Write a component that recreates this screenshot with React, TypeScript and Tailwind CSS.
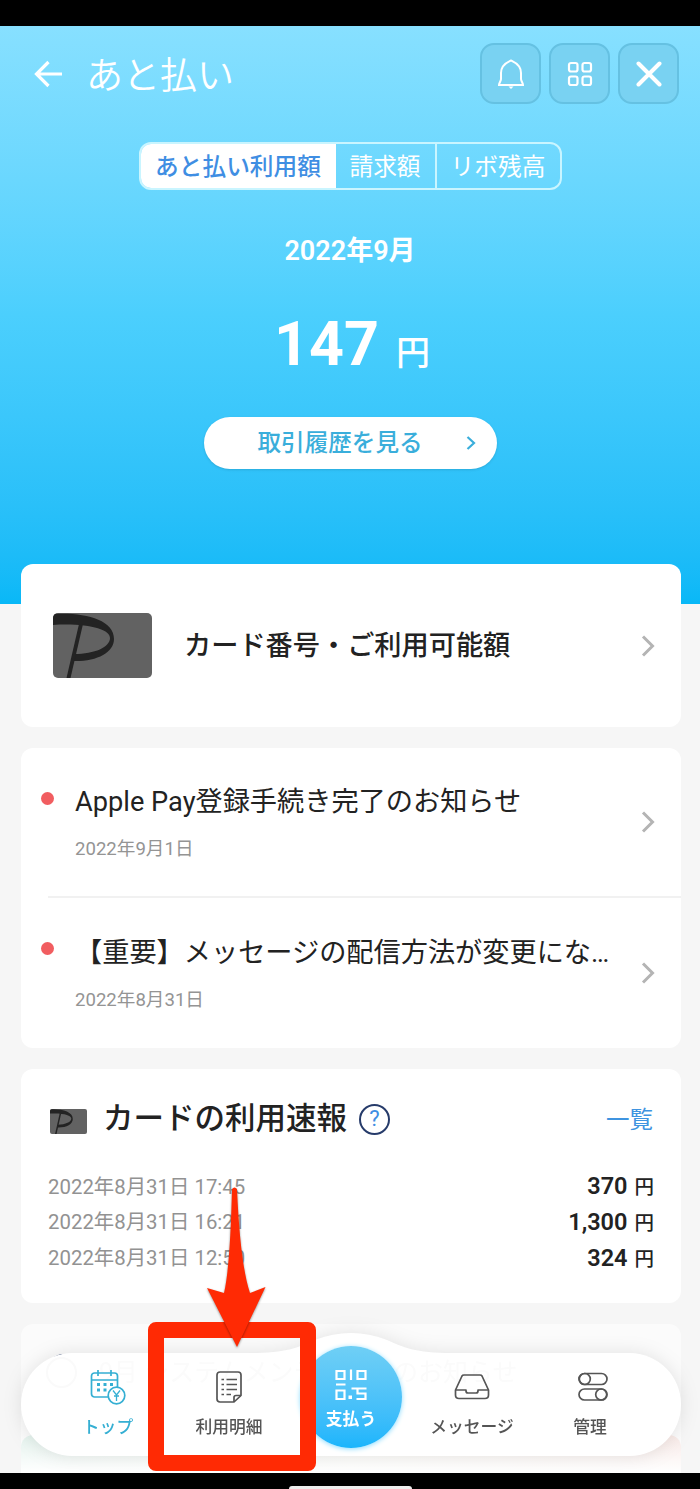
import type { ReactNode } from 'react';

interface Notice {
  title: string;
  date: string;
}

interface Usage {
  date: string;
  amount: string;
}

const notices: Notice[] = [
  { title: 'Apple Pay登録手続き完了のお知らせ', date: '2022年9月1日' },
  { title: '【重要】メッセージの配信方法が変更にな…', date: '2022年8月31日' },
];

const usages: Usage[] = [
  { date: '2022年8月31日 17:45', amount: '370' },
  { date: '2022年8月31日 16:21', amount: '1,300' },
  { date: '2022年8月31日 12:50', amount: '324' },
];

function ChevronRight() {
  return (
    <svg width="14" height="24" viewBox="0 0 14 24" fill="none" stroke="#b4b4b4" strokeWidth="3" className="shrink-0">
      <path d="M2 2.5L11.5 12L2 21.5" />
    </svg>
  );
}

function CardLogo({ className }: { className: string }) {
  return (
    <svg viewBox="0 0 99 65" className={className} preserveAspectRatio="none">
      <rect width="99" height="65" fill="#626262" />
      <path
        d="M0 1C30-1 61 6 61 26C61 40 43 49 19 48L21 41C42 41 57 34 57 25C57 16 34 10 0 12Z"
        fill="#232323"
      />
      <path d="M26 11H30L17.500 65H13.500Z" fill="#232323" />
    </svg>
  );
}

function HeaderButton({ children }: { children: ReactNode }) {
  return (
    <button className="flex h-[61px] w-[61px] items-center justify-center rounded-[14px] border-2 border-[#65c1e2] bg-[#79d2f2]">
      {children}
    </button>
  );
}

function Header() {
  return (
    <header className="flex items-center pl-[33px] pr-[21px] pt-[17px]">
      <svg width="30" height="30" viewBox="0 0 30 30" fill="none" stroke="#fff" strokeWidth="3.200">
        <path d="M15.500 3L3.500 15L15.500 27M3.500 15H29" />
      </svg>
      <h1 className="ml-[23px] flex-1 pt-[5px] text-[37px] font-[350] leading-none text-white">あと払い</h1>
      <div className="flex gap-2">
        <HeaderButton>
          <svg width="28" height="32" viewBox="0 0 28 32" fill="none" stroke="#fff" strokeWidth="2">
            <path d="M14 2.500C11 4 4 6.500 4 15V21C4 23 2 25 2 27H26C26 25 24 23 24 21V15C24 6.500 17 4 14 2.500Z" />
            <path d="M11.500 28.500H16.500L14 31Z" fill="#fff" stroke="none" />
          </svg>
        </HeaderButton>
        <HeaderButton>
          <svg width="26" height="26" viewBox="0 0 26 26" fill="none" stroke="#fff" strokeWidth="2.200">
            <rect x="2" y="2" width="8.500" height="8.500" rx="2" />
            <rect x="15.500" y="2" width="8.500" height="8.500" rx="2" />
            <rect x="2" y="15.500" width="8.500" height="8.500" rx="2" />
            <rect x="15.500" y="15.500" width="8.500" height="8.500" rx="2" />
          </svg>
        </HeaderButton>
        <HeaderButton>
          <svg width="26" height="26" viewBox="0 0 26 26" stroke="#fff" strokeWidth="4" strokeLinecap="round">
            <path d="M2.500 2.500L23.500 23.500M23.500 2.500L2.500 23.500" />
          </svg>
        </HeaderButton>
      </div>
    </header>
  );
}

function Summary() {
  return (
    <section className="flex h-[578px] flex-col bg-linear-to-b from-[#87e0ff] via-[#4bcffd] to-[#08b8f7]">
      <Header />
      <div className="mx-auto mt-[38px] flex h-[48px] w-[423px] overflow-hidden rounded-xl border-2 border-[#c9f5ff] text-[23.700px] text-white">
        <button className="w-[195px] bg-white pt-[3px] font-medium text-[#3f8ee3]">あと払い利用額</button>
        <button className="w-[101px] border-r-2 border-[#c9f5ff] pt-[3px]">請求額</button>
        <button className="flex-1 pt-[3px]">リボ残高</button>
      </div>
      <p className="mt-[46px] text-center text-[27px] font-semibold leading-[30px] text-white">2022年9月</p>
      <p className="mt-[48px] flex h-[60px] items-baseline justify-center gap-[17px] pl-1 font-medium leading-[60px] text-white">
        <span className="text-[61px] font-bold">147</span>
        <span className="text-[34px]">円</span>
      </p>
      <button className="mx-auto mt-[43px] flex h-[52px] w-[293px] items-center rounded-full bg-white pl-[54px] pr-[20px] text-[23.600px] font-medium text-[#3aaedb] shadow-sm">
        <span className="flex-1 pt-[1px] text-left">取引履歴を見る</span>
        <svg width="12" height="16" viewBox="0 0 12 16" fill="none" stroke="#3aaedb" strokeWidth="2.200">
          <path d="M2.500 2L9 8L2.500 14" />
        </svg>
      </button>
    </section>
  );
}

function NoticeRow({ notice }: { notice: Notice }) {
  return (
    <li className="relative ml-[27px] flex h-[150px] items-center pr-[26px]">
      <span className="absolute -left-[7px] top-[44px] h-[13px] w-[13px] rounded-full bg-[#f15d60]" />
      <div className="flex-1 pl-[27px] pt-[1px]">
        <p className="whitespace-nowrap text-[27.200px] leading-[40px] text-[#222]">{notice.title}</p>
        <p className="mt-[13px] text-[18.600px] leading-[28px] text-[#949494]">{notice.date}</p>
      </div>
      <ChevronRight />
    </li>
  );
}

function UsageCard() {
  return (
    <section className="mt-[21px] h-[234px] rounded-xl bg-white pl-[27px] pr-[27px] pt-[29px]">
      <div className="flex h-[42px] items-center">
        <CardLogo className="ml-[2px] mt-[5px] h-[25px] w-[37px] rounded-[2px]" />
        <h2 className="ml-[16px] text-[30.500px] font-medium leading-[42px] text-[#222]">カードの利用速報</h2>
        <span className="ml-[12px] flex h-[31px] w-[31px] items-center justify-center rounded-full border-2 border-[#263b6a] text-[22px] leading-none text-[#3f8ee3]">
          ?
        </span>
        <a className="ml-auto pr-[1px] pt-[3px] text-[23.500px] text-[#3f94e0]">一覧</a>
      </div>
      <ul className="mt-[29px]">
        {usages.map((u) => (
          <li key={u.date} className="flex h-[35.700px] items-center justify-between">
            <span className="text-[20.400px] text-[#929292]">{u.date}</span>
            <span className="flex items-baseline gap-[7px] text-[#222]">
              <b className="text-[23.500px] font-semibold">{u.amount}</b>
              <span className="text-[19.500px] font-medium">円</span>
            </span>
          </li>
        ))}
      </ul>
    </section>
  );
}

function NavItem({ label, active, className, children }: { label: string; active?: boolean; className: string; children: ReactNode }) {
  return (
    <button className={`absolute top-[15px] flex w-[120px] flex-col items-center ${active ? 'text-[#35afd3]' : 'text-[#555]'} ${className}`}>
      <span className="flex h-[38px] items-center justify-center">{children}</span>
      <span className="mt-[8px] text-[16.800px] font-medium leading-[26px]">{label}</span>
    </button>
  );
}

function BottomNav() {
  return (
    <nav className="absolute left-[21px] top-[1353px] h-[103px] w-[660px] drop-shadow-[0_0_9px_rgba(0,0,0,0.1)]">
      <svg className="absolute left-[230px] -top-[20px]" width="200" height="60" viewBox="0 0 200 60">
        <path d="M0 20C35 20 49 14 64 7Q100-7 136 7C151 14 165 20 200 20V60H0Z" fill="#fff" />
      </svg>
      <div className="absolute inset-0 rounded-full bg-white" />
      <p className="absolute left-[78px] top-[3px] whitespace-nowrap text-[25px] leading-[34px] text-[#fbfbfb]">9月 システムメンテナンスのお知らせ</p>
      <span className="absolute left-[25px] top-[4px] h-[31px] w-[31px] rounded-full border-2 border-[#fafafa]" />
      <NavItem label="トップ" active className="left-[27px]">
        <svg width="38" height="38" viewBox="0 0 38 38" fill="none" stroke="currentColor" strokeWidth="1.700">
          <rect x="2.500" y="5" width="26" height="24" rx="3" />
          <path d="M2.500 12H28.500M9 2V8M22 2V8" />
          <path d="M8 16.500H11M14.500 16.500H17.500M21 16.500H24M8 22H11M14.500 22H17.500" strokeWidth="3" />
          <circle cx="27.500" cy="27.500" r="8.300" fill="#fff" />
          <path d="M24 22.500L27.500 27L31 22.500M27.500 27V33M25 28H30" strokeWidth="1.300" />
        </svg>
      </NavItem>
      <NavItem label="利用明細" className="left-[148px]">
        <svg width="28" height="34" viewBox="0 0 28 34" fill="none" stroke="currentColor" strokeWidth="1.700" strokeLinejoin="round">
          <path d="M19 32H5Q2 32 2 29V5Q2 2 5 2H23Q26 2 26 5V25.500Z" />
          <path d="M19 32V27.500Q19 25.500 21 25.500H26" />
          <path d="M6.500 9.500H9M11.500 9.500H22M6.500 14.500H9M11.500 14.500H22M6.500 19.500H9M11.500 19.500H22M6.500 24.500H9M11.500 24.500H16" />
        </svg>
      </NavItem>
      <button className="absolute -top-[7px] left-[279px] flex h-[102px] w-[102px] flex-col items-center rounded-full bg-linear-to-b from-[#6fcff5] to-[#19b5fc] pt-[22px] text-white shadow-[0_1px_5px_#8bdcff]">
        <svg width="34" height="34" viewBox="0 0 34 34" fill="none" stroke="#fff" strokeWidth="2.200">
          <path d="M2.500 3H10.500V11H2.500ZM23.500 3H31.500V11H23.500ZM17 1.500V12M2 16.500H11.500M2.500 22.500H10.500V31H2.500ZM17.500 20.500H32.500M23.500 20.500V25.500H31.500V31H22.500" />
          <rect x="14.500" y="27.500" width="3.500" height="3.500" fill="#fff" stroke="none" />
        </svg>
        <span className="mt-[5px] text-[16.800px] font-semibold leading-[24px]">支払う</span>
      </button>
      <NavItem label="メッセージ" className="left-[391px]">
        <svg width="36" height="28" viewBox="0 0 36 28" fill="none" stroke="currentColor" strokeWidth="1.700" strokeLinejoin="round">
          <path d="M1.500 17L8 3Q8.500 2 10 2H26Q27.500 2 28 3L34.500 17V22Q34.500 25.500 31 25.500H5Q1.500 25.500 1.500 22Z" />
          <path d="M1.500 17H12V18Q12 20 14 20H22Q24 20 24 18V17H34.500" />
        </svg>
      </NavItem>
      <NavItem label="管理" className="left-[509px]">
        <svg width="32" height="30" viewBox="0 0 32 30" fill="none" stroke="currentColor" strokeWidth="1.700" className="ml-[6px]">
          <rect x="2" y="1.500" width="28" height="11" rx="5.500" />
          <circle cx="7.800" cy="7" r="5.500" />
          <rect x="2" y="17" width="28" height="11" rx="5.500" />
          <circle cx="24.200" cy="22.500" r="5.500" />
        </svg>
      </NavItem>
    </nav>
  );
}

// Red frame and arrow pointing at the 利用明細 tab
function Highlight() {
  return (
    <>
      <div className="absolute left-[148px] top-[1322px] h-[149px] w-[168px] rounded-lg border-16 border-[#ff2a04]" />
      <svg className="absolute left-[200px] top-[1180px] drop-shadow-[0_1px_1px_rgba(0,0,0,0.4)]" width="72" height="172" viewBox="0 0 72 172">
        <path d="M32 9Q34.500 6 37 9C39 55 43 92 50 113L65.500 107L37 167L7 108L24 113C29 92 31 50 32 9Z" fill="#ff2a04" />
      </svg>
    </>
  );
}

export default function App() {
  return (
    <div className="relative flex h-[1489px] w-[700px] flex-col overflow-hidden bg-[#f6f6f6] font-['Roboto','Noto_Sans_CJK_JP',sans-serif]">
      <div className="h-[26px] shrink-0 bg-black" />
      <div className="shrink-0">
        <Summary />
      </div>
      <main className="relative -mt-10 flex flex-1 flex-col overflow-hidden pl-[21px] pr-[19px]">
        <section className="flex h-[163px] shrink-0 items-center rounded-xl bg-white pl-[32px] pr-[26px]">
          <CardLogo className="h-[65px] w-[99px] rounded-[5px]" />
          <h2 className="ml-[32px] flex-1 pt-[1px] text-[27.200px] font-medium text-[#222]">カード番号・ご利用可能額</h2>
          <ChevronRight />
        </section>
        <ul className="mt-[21px] shrink-0 divide-y-2 divide-[#f1f1f1] rounded-xl bg-white">
          {notices.map((notice) => (
            <NoticeRow key={notice.date} notice={notice} />
          ))}
        </ul>
        <UsageCard />
        <section className="relative mt-[21px] flex h-[149px] shrink-0 flex-col justify-between overflow-hidden rounded-t-xl bg-[#fbfbfb] pl-[27px] pt-[30px]">
          <span className="h-[31px] w-[31px] rounded-full border-2 border-[#263b6a]" />
          <div className="-ml-[27px] h-[38px] rounded-t-xl bg-linear-to-r from-[#e2f2ec] via-[#f8f8f2] to-[#f8e8e5]" />
          <div className="absolute inset-x-0 bottom-0 h-[38px] bg-linear-to-b from-white/10 to-white" />
        </section>
      </main>
      <div className="flex h-[16px] shrink-0 items-end justify-center bg-black">
        <div className="h-[3px] w-[123px] rounded-t bg-[#eee]" />
      </div>
      <BottomNav />
      <Highlight />
    </div>
  );
}
